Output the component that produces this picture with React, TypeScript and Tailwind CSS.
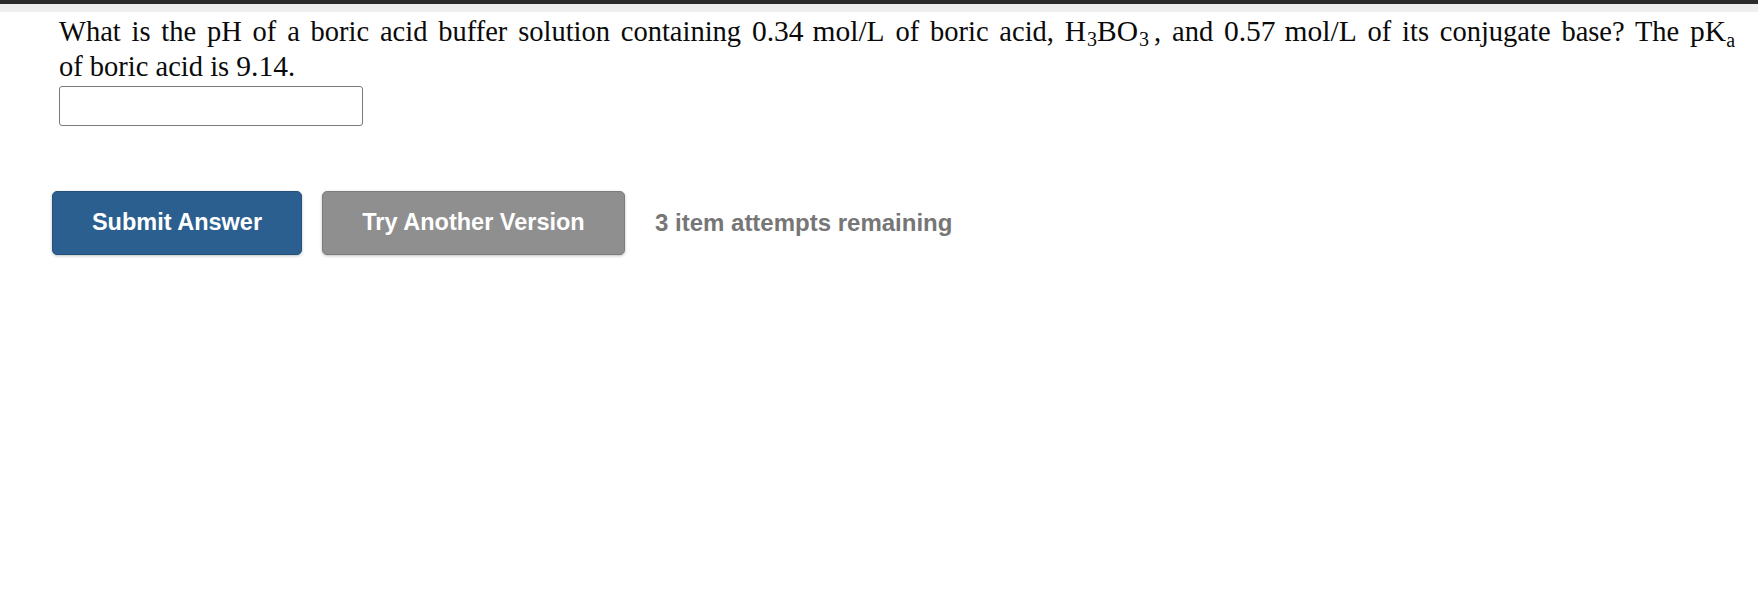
import React from "react";

const serif = "font-['Liberation_Serif','Times_New_Roman',serif]";
const sans = "font-['Liberation_Sans',Arial,sans-serif]";

function M({ children }: { children: React.ReactNode }) {
  return <span className="inline-block whitespace-nowrap text-[29.5px] leading-none">{children}</span>;
}

function Sub({ children }: { children: React.ReactNode }) {
  return (
    <span className={`${serif} text-[20px] leading-none relative top-[5px] ml-[1px]`}>{children}</span>
  );
}

export default function App() {
  return (
    <div className="min-h-[602px] w-full bg-white">
      <div className="h-[4px] bg-[#2b2b2b]" />
      <div className="h-[8px] bg-[#efefef]" />
      <div className="pl-[52px] pr-[16px]">
        <div className={`${serif} text-[28.5px] leading-[35px] text-[#0a0a0a] pl-[7px] mt-[2px]`}>
          <div className="w-[1676px] whitespace-nowrap text-justify [text-align-last:justify]">
            What is the pH of a boric acid buffer solution containing{" "}
            <M>
              0.34<span className="ml-[9px]">mol/L</span>
            </M>{" "}
            of boric acid,{" "}
            <M>
              H<Sub>3</Sub>BO<Sub>3</Sub>
            </M>
            <span className="ml-[5px]">,</span> and{" "}
            <M>
              0.57<span className="ml-[9px]">mol/L</span>
            </M>{" "}
            of its conjugate base? The{" "}
            <M>
              pK
              <span className={`${serif} text-[20px] leading-none relative top-[6px]`}>a</span>
            </M>
          </div>
          <div className="whitespace-nowrap">
            of boric acid is <M>9.14</M>.
          </div>
        </div>
        <div className="pl-[7px] mt-[2px]">
          <input
            type="text"
            className="block w-[304px] h-[40px] border-[1.5px] border-[#7a7a7a] rounded-[3px] bg-white outline-none"
          />
        </div>
        <div className={`${sans} flex items-center mt-[65px]`}>
          <button className="w-[250px] h-[64px] rounded-[5px] bg-[#2b5f90] border border-[#24527d] text-white font-bold text-[23.5px] shadow-[0_1px_3px_rgba(0,0,0,0.25)]">
            Submit Answer
          </button>
          <button className="ml-[20px] w-[303px] h-[64px] rounded-[5px] bg-[#8f8f8f] border border-[#7d7d7d] text-white font-bold text-[23.5px] shadow-[0_1px_3px_rgba(0,0,0,0.25)]">
            Try Another Version
          </button>
          <span className="ml-[30px] text-[#767676] font-bold text-[24px]">3 item attempts remaining</span>
        </div>
      </div>
    </div>
  );
}
